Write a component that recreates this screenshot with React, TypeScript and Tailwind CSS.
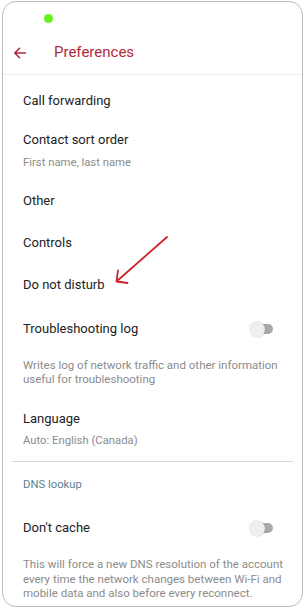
import React from "react";

const font = { fontFamily: "Roboto, 'Noto Sans', sans-serif" };

function Toggle() {
  return (
    <div className="relative w-[24px] h-[16px] flex items-center">
      <div className="ml-[5px] w-[18px] h-[10px] rounded-full bg-[#a9a9a9]" />
      <div className="absolute left-0 top-[1px] w-[15px] h-[15px] rounded-full bg-[#efefef] shadow-[0_0_2px_rgba(0,0,0,0.25)]" />
    </div>
  );
}

function Title({ children, mt }: { children: React.ReactNode; mt: string }) {
  return <div className={`${mt} h-[20px] leading-[20px] text-[13px] text-[#222]`}>{children}</div>;
}

function Sub({ children, mt }: { children: React.ReactNode; mt: string }) {
  return <div className={`${mt} h-[16px] leading-[16px] text-[11.3px] text-[#8c8c8c]`}>{children}</div>;
}

export default function App() {
  return (
    <div className="w-[305px] h-[611px] bg-white" style={font}>
      <div className="relative ml-[2px] mt-[1px] w-[301px] h-[606px] rounded-[14px] border border-[#bdbdbd] overflow-hidden bg-white">
        {/* status bar */}
        <div className="h-[29px] pt-[12px] pl-[41px]">
          <div className="w-[9px] h-[9px] rounded-full bg-[#6bf01c]" />
        </div>
        {/* header */}
        <div className="h-[44px] flex items-center border-b border-[#ececec]">
          <svg className="ml-[10px]" width="14" height="14" viewBox="0 0 14 14" fill="none" stroke="#b02a3c" strokeWidth="1.6" strokeLinecap="round" strokeLinejoin="round">
            <path d="M12.5 7H1.8M6.5 2.3L1.8 7l4.7 4.7" />
          </svg>
          <span className="ml-[27px] text-[15px] text-[#b02a3c]">Preferences</span>
        </div>
        {/* list */}
        <div className="pl-[20px] pr-[28px]">
          <Title mt="mt-[16px]">Call forwarding</Title>
          <Title mt="mt-[19px]">Contact sort order</Title>
          <Sub mt="mt-[5px]">First name, last name</Sub>
          <Title mt="mt-[20px]">Other</Title>
          <Title mt="mt-[22px]">Controls</Title>
          <Title mt="mt-[22px]">Do not disturb</Title>
          <div className="mt-[24px] h-[20px] flex items-center justify-between">
            <span className="text-[13px] text-[#222]">Troubleshooting log</span>
            <Toggle />
          </div>
        </div>
        <div className="pl-[20px] mt-[19px] text-[11.5px] leading-[14px] text-[#8c8c8c] whitespace-nowrap">
          Writes log of network traffic and other information
          <br />
          useful for troubleshooting
        </div>
        <div className="pl-[20px] pr-[28px]">
          <Title mt="mt-[23px]">Language</Title>
          <Sub mt="mt-[4px]">Auto: English (Canada)</Sub>
        </div>
        <div className="mt-[12px] mx-[9px] h-[1px] bg-[#d6d6d6]" />
        <div className="pl-[20px] pr-[28px]">
          <div className="mt-[15px] h-[16px] leading-[16px] text-[11.3px] text-[#5b7f8e]">DNS lookup</div>
          <div className="mt-[25px] h-[20px] flex items-center justify-between">
            <span className="text-[13px] text-[#222]">Don't cache</span>
            <Toggle />
          </div>
        </div>
        <div className="pl-[20px] mt-[19px] text-[11.5px] leading-[14.5px] text-[#8c8c8c] whitespace-nowrap">
          This will force a new DNS resolution of the account
          <br />
          every time the network changes between Wi-Fi and
          <br />
          mobile data and also before every reconnect.
        </div>
        {/* annotation arrow */}
        <svg className="absolute left-0 top-0 pointer-events-none" width="301" height="607" viewBox="2 1 301 607" fill="none" stroke="#cc2229" strokeWidth="1.8" strokeLinecap="round">
          <path d="M166 236L115.5 280.5M115.5 280.5L117 269.5M115.5 280.5L126.5 282" />
        </svg>
      </div>
    </div>
  );
}
